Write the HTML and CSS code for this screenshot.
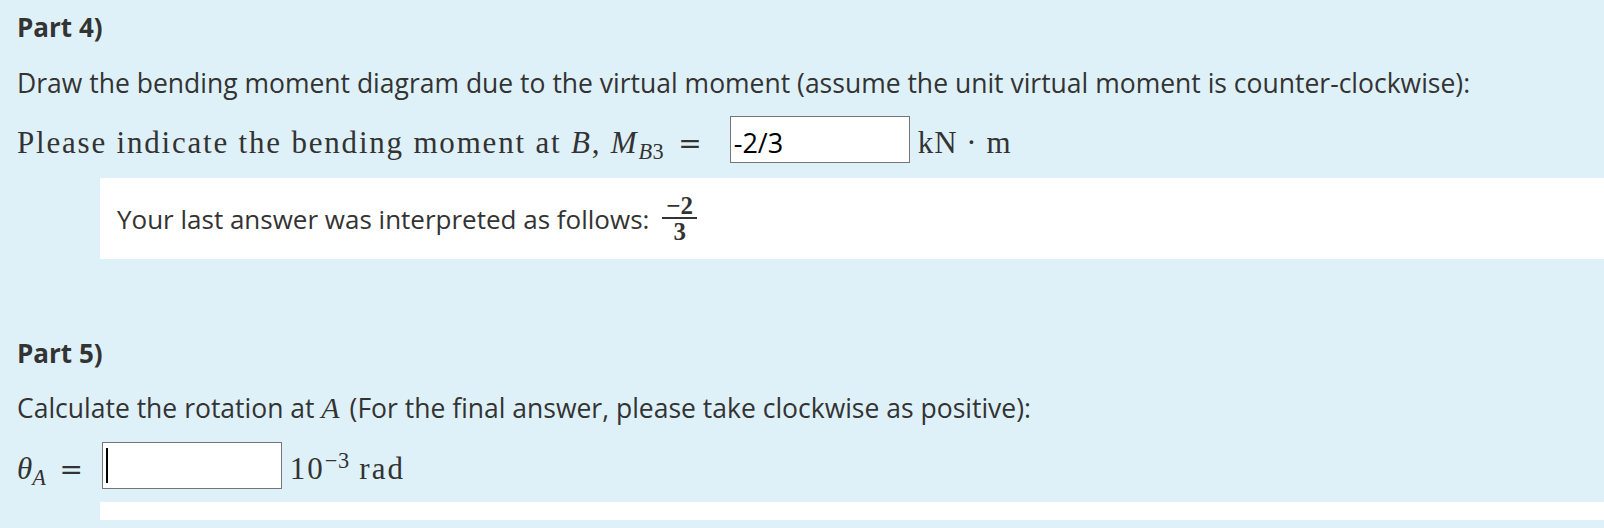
FILE: index.html
```html
<!DOCTYPE html>
<html lang="en">
<head>
<meta charset="utf-8">
<title>Part 4 / Part 5</title>
<link rel="stylesheet" href="styles.css">
</head>
<body>
<main class="page">
  <section class="part">
    <h3 class="part-title">Part 4)</h3>
    <p class="prompt">Draw the bending moment diagram due to the virtual moment (assume the unit virtual moment is counter-clockwise):</p>
    <div class="answer-row">
      <span class="math lead">Please indicate the bending moment at <i>B</i>, <i>M</i><sub><i>B</i>3</sub></span>
      <span class="math eq">=</span>
      <span class="field"><input class="answer" type="text" value="-2/3"></span>
      <span class="math unit">kN · m</span>
    </div>
    <div class="feedback">
      <span class="feedback-text">Your last answer was interpreted as follows:</span>
      <span class="frac"><span class="num">−2</span><span class="den">3</span></span>
    </div>
  </section>
  <section class="part">
    <h3 class="part-title second">Part 5)</h3>
    <p class="prompt">Calculate the rotation at <i class="mi">A</i> (For the final answer, please take clockwise as positive):</p>
    <div class="answer-row theta-row">
      <span class="math lead"><i>θ</i><sub><i>A</i></sub></span>
      <span class="math eq">=</span>
      <span class="field"><input class="answer" type="text" value=""><span class="caret"></span></span>
      <span class="math unit">10<sup>−3</sup> rad</span>
    </div>
    <div class="feedback empty"></div>
  </section>
</main>
</body>
</html>
```
FILE: styles.css
```css
html, body {
  margin: 0;
  padding: 0;
}

body {
  background: #dff1f8;
  color: #333333;
  font-family: "Open Sans", "Noto Sans", sans-serif;
  height: 528px;
  overflow: hidden;
}

.page {
  padding-left: 17px;
}

.part-title {
  margin: 11px 0 0;
  font-size: 26px;
  line-height: 32px;
  font-weight: 700;
}

.part-title.second {
  margin-top: 78px;
}

.prompt {
  margin: 22px 0 0;
  font-size: 26.5px;
  line-height: 36px;
}

.prompt .mi {
  font-family: "Liberation Serif", serif;
  font-size: 30px;
  letter-spacing: 1px;
  margin-right: 2px;
}

.part-title.second + .prompt {
  margin-top: 21px;
}

.answer-row {
  display: flex;
  align-items: baseline;
  margin-top: 15px;
}

.math {
  font-family: "Liberation Serif", "Times New Roman", serif;
  font-size: 31px;
  line-height: 34px;
  letter-spacing: 1.8px;
  color: #333333;
}

.math sub {
  font-size: 0.72em;
  line-height: 0;
  vertical-align: -0.28em;
  letter-spacing: 0.5px;
}

.math sup {
  font-size: 0.72em;
  line-height: 0;
  vertical-align: 0.5em;
  letter-spacing: 0.5px;
}

.eq {
  font-family: "DejaVu Serif", serif;
  font-size: 28px;
  letter-spacing: 0;
  margin: 0 28px 0 14px;
}

.field {
  position: relative;
  display: inline-block;
}

.answer {
  box-sizing: border-box;
  width: 180px;
  height: 47px;
  margin: 0;
  padding: 5px 3px 0;
  border: 1px solid #767676;
  border-radius: 0;
  background: #ffffff;
  color: #000000;
  font-family: "Open Sans", "Noto Sans", sans-serif;
  font-size: 27px;
  outline: none;
}

.caret {
  position: absolute;
  left: 4px;
  top: 6px;
  width: 2px;
  height: 35px;
  background: #000000;
}

.unit {
  margin-left: 8px;
  letter-spacing: 1px;
}

.feedback {
  display: flex;
  align-items: center;
  height: 81px;
  margin: 15px 0 0 83px;
  padding: 0 17px;
  background: #ffffff;
}

.feedback-text {
  font-size: 26px;
  line-height: 34px;
}

.frac {
  display: inline-flex;
  flex-direction: column;
  align-items: stretch;
  margin-left: 13px;
  font-family: "Liberation Serif", serif;
  font-weight: 700;
  font-size: 25px;
  line-height: 21px;
  text-align: center;
  color: #333333;
}

.num {
  padding: 0 4px 1px;
  border-bottom: 2px solid #333333;
}

.den {
  padding-top: 2px;
}

.theta-row {
  margin-top: 16px;
}

.theta-row .lead {
  letter-spacing: 0;
}

.theta-row .eq {
  margin: 0 19px 0 13px;
}

.theta-row .unit {
  letter-spacing: 2px;
}

.feedback.empty {
  height: 18px;
  margin-top: 13px;
}
```
